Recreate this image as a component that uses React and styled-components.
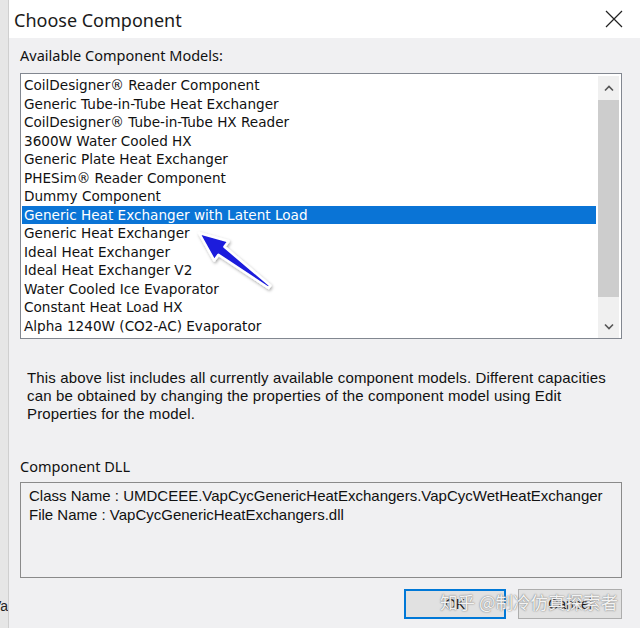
import React from "react";
import styled, { createGlobalStyle } from "styled-components";

const GlobalStyle = createGlobalStyle`
  html, body {
    margin: 0;
    padding: 0;
    background: #f0f0f0;
  }
  body {
    font-family: "Liberation Sans", Arial, sans-serif;
    color: #000;
  }
`;

const models = [
  "CoilDesigner® Reader Component",
  "Generic Tube-in-Tube Heat Exchanger",
  "CoilDesigner® Tube-in-Tube HX Reader",
  "3600W Water Cooled HX",
  "Generic Plate Heat Exchanger",
  "PHESim® Reader Component",
  "Dummy Component",
  "Generic Heat Exchanger with Latent Load",
  "Generic Heat Exchanger",
  "Ideal Heat Exchanger",
  "Ideal Heat Exchanger V2",
  "Water Cooled Ice Evaporator",
  "Constant Heat Load HX",
  "Alpha 1240W (CO2-AC) Evaporator",
];

const descriptionLines = [
  "This above list includes all currently available component models. Different capacities",
  "can be obtained by changing the properties of the component model using Edit",
  "Properties for the model.",
];

const Screen = styled.div`
  position: relative;
  display: flex;
  width: 640px;
  height: 628px;
  overflow: hidden;
`;

const BehindWindow = styled.div`
  width: 8px;
  flex-shrink: 0;
  background: #e6e6e6;
  border-right: 1px solid #cfcfcf;
  display: flex;
  flex-direction: column;
  justify-content: flex-end;
  overflow: hidden;
  padding-bottom: 14px;
  font-size: 14px;
  color: #222;
  white-space: nowrap;
  direction: rtl;
`;

const Dialog = styled.div`
  flex: 1;
  display: flex;
  flex-direction: column;
  background: #f0f0f2;
`;

const TitleBar = styled.div`
  height: 38px;
  background: #fff;
  display: flex;
  align-items: center;
  justify-content: space-between;
  padding: 0 16px 0 5px;
`;

const Title = styled.div`
  font-family: "Noto Sans", "Open Sans", sans-serif;
  font-size: 18px;
  color: #1a1a1a;
  margin-top: 1px;
`;

const CloseButton = styled.div`
  width: 20px;
  height: 20px;
  display: flex;
  align-items: center;
  justify-content: center;
`;

const Body = styled.div`
  display: flex;
  flex-direction: column;
  padding: 8px 18px 0 11px;
`;

const Label = styled.div`
  font-family: "Noto Sans", "Open Sans", sans-serif;
  font-size: 14.5px;
  line-height: 18px;
  color: #111;
`;

const ListBox = styled.div`
  margin-top: 9px;
  height: 262px;
  border: 1px solid #828790;
  background: #fff;
  display: flex;
  padding: 2px 2px 0 1px;
`;

const Items = styled.div`
  flex: 1;
  display: flex;
  flex-direction: column;
`;

const Item = styled.div`
  height: 18.5px;
  line-height: 19px;
  padding-left: 2px;
  font-family: "DejaVu Sans", Tahoma, sans-serif;
  font-size: 13.6px;
  color: ${(p) => (p.$selected ? "#fff" : "#111")};
  background: ${(p) => (p.$selected ? "#0a74d6" : "transparent")};
  white-space: nowrap;
`;

const ScrollBar = styled.div`
  width: 21px;
  margin-left: 2px;
  display: flex;
  flex-direction: column;
  align-items: center;
  background: #f0f0f0;
`;

const ScrollArrow = styled.div`
  height: 24px;
  width: 100%;
  display: flex;
  align-items: center;
  justify-content: center;
`;

const Thumb = styled.div`
  width: 100%;
  height: 197px;
  background: #cdcdcd;
`;

const Track = styled.div`
  flex: 1;
`;

const Description = styled.div`
  margin: 30px 0 0 7px;
  font-size: 15px;
  letter-spacing: 0.15px;
  line-height: 18px;
  color: #111;
  white-space: nowrap;
`;

const DllLabel = styled(Label)`
  margin-top: 34px;
`;

const DllBox = styled.div`
  box-sizing: border-box;
  margin-top: 7px;
  height: 96px;
  border: 1px solid #8a8a8a;
  padding: 3px 8px;
  font-size: 15px;
  line-height: 19px;
  color: #111;
  white-space: nowrap;
`;

const ButtonRow = styled.div`
  display: flex;
  justify-content: flex-end;
  gap: 12px;
  margin-top: 11px;
`;

const Button = styled.div`
  width: ${(p) => (p.$default ? "98px" : "102px")};
  height: ${(p) => (p.$default ? "26px" : "28px")};
  border: ${(p) => (p.$default ? "2px solid #0078d7" : "1px solid #adadad")};
  background: #e1e1e1;
  display: flex;
  align-items: center;
  justify-content: center;
  font-size: 14px;
  color: #111;
`;

const Watermark = styled.div`
  position: absolute;
  left: 440px;
  top: 590px;
  font-family: "Noto Sans CJK SC", sans-serif;
  font-size: 17.5px;
  line-height: 24px;
  color: rgba(255, 255, 255, 0.92);
  text-shadow: 0 0 1px #777, 0 0 2px #999;
  white-space: nowrap;
  pointer-events: none;
`;

const Pointer = styled.svg`
  position: absolute;
  left: 0;
  top: 0;
  pointer-events: none;
`;

const Chevron = ({ up }) => (
  <svg width="10" height="7" viewBox="0 0 10 7">
    <path
      d={up ? "M1 5.5 L5 1.5 L9 5.5" : "M1 1.5 L5 5.5 L9 1.5"}
      fill="none"
      stroke="#555"
      strokeWidth="1.6"
    />
  </svg>
);

const App = () => {
  return (
    <Screen>
      <GlobalStyle />
      <BehindWindow>Va</BehindWindow>
      <Dialog>
        <TitleBar>
          <Title>Choose Component</Title>
          <CloseButton>
            <svg width="18" height="18" viewBox="0 0 18 18">
              <path d="M1 1 L17 17 M17 1 L1 17" stroke="#222" strokeWidth="1.2" />
            </svg>
          </CloseButton>
        </TitleBar>
        <Body>
          <Label>Available Component Models:</Label>
          <ListBox>
            <Items>
              {models.map((m, i) => (
                <Item key={m} $selected={i === 7}>
                  {m}
                </Item>
              ))}
            </Items>
            <ScrollBar>
              <ScrollArrow>
                <Chevron up />
              </ScrollArrow>
              <Thumb />
              <Track />
              <ScrollArrow>
                <Chevron />
              </ScrollArrow>
            </ScrollBar>
          </ListBox>
          <Description>
            {descriptionLines.map((line) => (
              <div key={line}>{line}</div>
            ))}
          </Description>
          <DllLabel>Component DLL</DllLabel>
          <DllBox>
            <div>Class Name : UMDCEEE.VapCycGenericHeatExchangers.VapCycWetHeatExchanger</div>
            <div>File Name : VapCycGenericHeatExchangers.dll</div>
          </DllBox>
          <ButtonRow>
            <Button $default>OK</Button>
            <Button>Cancel</Button>
          </ButtonRow>
        </Body>
      </Dialog>
      <Pointer width="640" height="628" viewBox="0 0 640 628">
        <defs>
          <filter id="sh" x="-20%" y="-20%" width="140%" height="140%">
            <feDropShadow dx="1" dy="1.5" stdDeviation="1.5" floodColor="#000" floodOpacity="0.35" />
          </filter>
        </defs>
        <polygon
          points="199,233 228.6,241.2 224.4,246.8 270.3,285.6 268.5,288 218.4,254.8 214.2,260.4"
          fill="#1a1adc"
          stroke="#fff"
          strokeWidth="2.5"
          strokeLinejoin="round"
          filter="url(#sh)"
        />
      </Pointer>
      <Watermark>知乎 @制冷仿真探索者</Watermark>
    </Screen>
  );
};

export default App;
